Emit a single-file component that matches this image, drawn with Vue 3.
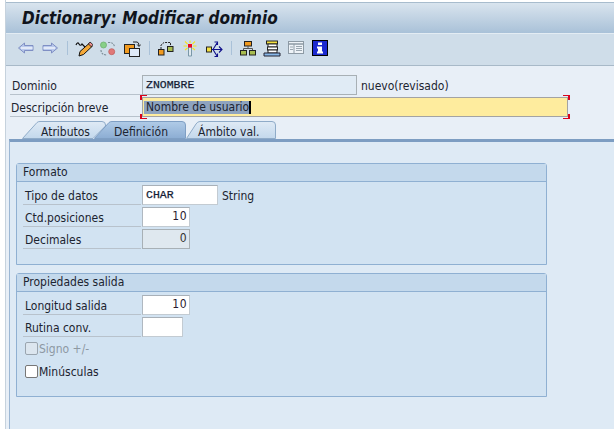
<script setup>
const tabs = [
  { label: 'Atributos', cls: 'tab-a', w: 84, grad: 'url(#tabLight)', path: 'M0.5 17.5 L15 1.5 Q16 0.5 18 0.5 H80 Q83.5 0.5 83.5 4 V5 L71 17.5 Z' },
  { label: 'Definición', cls: 'tab-d', w: 92, grad: 'url(#tabActive)', path: 'M0.5 17.5 L15 1.5 Q16 0.5 18 0.5 H88 Q91.5 0.5 91.5 4 V17.5 Z' },
  { label: 'Ámbito val.', cls: 'tab-m', w: 90, grad: 'url(#tabLight)', path: 'M0.5 17.5 L10 3 Q11.5 0.5 14 0.5 H86 Q89.5 0.5 89.5 4 V17.5 Z' }
]
</script>

<template>
  <div class="screen">
    <div class="window">
      <header class="title-bar"><h1>Dictionary: Modificar dominio</h1></header>

      <nav class="toolbar">
        <span class="ico"><svg width="18" height="16" viewBox="0 0 18 16"><path d="M1.5 8 L7.5 3 V5.5 H16 V10.5 H7.5 V13 Z" fill="#b9c9ec" stroke="#7f8fc4"/><path d="M4 8 H15.5" stroke="#e2e9f8" stroke-width="2"/></svg></span>
        <span class="ico"><svg width="18" height="16" viewBox="0 0 18 16"><path d="M16.5 8 L10.5 3 V5.5 H2 V10.5 H10.5 V13 Z" fill="#b9c9ec" stroke="#7f8fc4"/><path d="M2.5 8 H14" stroke="#e2e9f8" stroke-width="2"/></svg></span>
        <i class="sep"></i>
        <span class="ico"><svg width="18" height="18" viewBox="0 0 18 18"><path d="M1 6 Q2.5 2.5 4 5 T7 5 L10 8" fill="none" stroke="#111" stroke-width="1.2"/><path d="M4 17 L5 12.5 L14 4.5 L17 7.5 L8.5 15.5 Z" fill="#f4a838" stroke="#111"/><path d="M13.5 5 L15 3 L17.8 5.5 L16.5 8 Z" fill="#f09090" stroke="#111" stroke-width=".8"/></svg></span>
        <span class="ico"><svg width="18" height="18" viewBox="0 0 18 18"><circle cx="4.5" cy="6" r="3" fill="#88d088" stroke="#70b070" stroke-width=".8"/><circle cx="12.7" cy="12.7" r="3" fill="#e07878" stroke="#c06060" stroke-width=".8"/><path d="M9 3.5 Q15 3 15.5 8 M2 11 Q2 16 8 16" fill="none" stroke="#7a8a94" stroke-width="1.1" stroke-dasharray="2 1"/></svg></span>
        <span class="ico"><svg width="18" height="18" viewBox="0 0 18 18"><rect x="1.5" y="5.5" width="10" height="9" fill="#f09a20" stroke="#222"/><rect x="6.5" y="9.5" width="10" height="8" fill="#dfeaf8" stroke="#222"/><path d="M10 3 H14 Q16 3 16 7 M14.2 5.5 L16 7.5 L17.8 5.5" fill="none" stroke="#222"/></svg></span>
        <i class="sep"></i>
        <span class="ico"><svg width="18" height="18" viewBox="0 0 18 18"><rect x="1.5" y="10.5" width="5.5" height="5.5" fill="#f09a20" stroke="#222"/><rect x="10.5" y="7.5" width="5.5" height="5" fill="#a8bc50" stroke="#222"/><path d="M4 10 V6 L7 3.5 H13.5 V7" fill="none" stroke="#222" stroke-dasharray="2 1"/></svg></span>
        <span class="ico"><svg width="18" height="18" viewBox="0 0 18 18"><path d="M7.5 8 H10.5 V17 H7.5 Z" fill="#dfe8ee" stroke="#7a98a8"/><rect x="7" y="5" width="4" height="3.5" fill="#ee0a20"/><path d="M9 1.5 V4 M4 2.5 L6.5 5 M14 2.5 L11.5 5 M2.5 7 H6 M12 7 H15.5 M4 11 L6.5 9 M14 11 L11.5 9" stroke="#f2e420" stroke-width="1.1"/></svg></span>
        <span class="ico"><svg width="18" height="18" viewBox="0 0 18 18"><rect x="1.5" y="8" width="5" height="5" fill="#f4e040" stroke="#222"/><path d="M6.5 10.5 H16.5 M14 7.5 L17 10.5 L14 13.5 M8 10.5 L12 4 M9.5 3 H12.5 V6 M8 10.5 L12 17 M9.5 17.5 H12.5 V14.5" fill="none" stroke="#10108a" stroke-width="1.1"/></svg></span>
        <i class="sep"></i>
        <span class="ico"><svg width="18" height="18" viewBox="0 0 18 18"><rect x="5.5" y="2.5" width="7" height="4.5" fill="#f09a20" stroke="#222"/><path d="M9 7 V9.5 M4.5 11.5 V9.5 H13.5 V11.5" fill="none" stroke="#555"/><rect x="1.5" y="11.5" width="6" height="4.5" fill="#a8bc50" stroke="#222"/><rect x="10.5" y="11.5" width="6" height="4.5" fill="#a8bc50" stroke="#222"/></svg></span>
        <span class="ico"><svg width="18" height="18" viewBox="0 0 18 18"><rect x="3.5" y="2" width="11" height="3" fill="#f4e040" stroke="#222"/><rect x="5" y="5" width="9" height="3" fill="#fff" stroke="#222"/><rect x="4.5" y="8" width="10" height="3" fill="#fff" stroke="#222"/><rect x="5" y="11" width="9" height="3" fill="#fff" stroke="#222"/><path d="M1 14 H17 V17 H1 Z" fill="#88b8e8" stroke="#223"/></svg></span>
        <span class="ico"><svg width="16" height="14" viewBox="0 0 16 14"><rect x=".5" y=".5" width="15" height="12" fill="#eef3f8" stroke="#8d9aa5"/><path d="M.5 3 H15.5" stroke="#8d9aa5" stroke-width="1.5"/><path d="M6 3 V12" stroke="#8d9aa5"/><path d="M2 6 H5 M2 8.5 H5 M8 5.5 H14 M8 7.5 H14 M8 9.5 H14" stroke="#9aa6b0"/></svg></span>
        <span class="ico"><svg width="16" height="16" viewBox="0 0 16 16"><rect x=".5" y=".5" width="15" height="15" fill="#1c2ad0" stroke="#000"/><path d="M6 2.5 H10 V5 H6 Z M5 6.5 H10 V11.5 H11 V13.5 H5 V11.5 H6 V8.5 H5 Z" fill="#fff"/></svg></span>
      </nav>

      <div class="content">
        <div class="head-row first">
          <label class="lbl">Dominio</label>
          <div class="field ro mono">ZNOMBRE</div>
          <span class="note">nuevo(revisado)</span>
        </div>
        <div class="head-row desc-row">
          <label class="lbl">Descripción breve</label>
          <div class="field focus">
            <span class="sel">Nombre de usuario</span><span class="caret"></span>
            <i class="mark tl"></i><i class="mark bl"></i><i class="mark tr"></i><i class="mark br"></i>
          </div>
        </div>

        <svg class="defs" width="0" height="0">
          <defs>
            <linearGradient id="tabLight" x1="0" y1="0" x2="0" y2="1"><stop offset="0" stop-color="#dfeaf5"/><stop offset="1" stop-color="#c3d8ec"/></linearGradient>
            <linearGradient id="tabActive" x1="0" y1="0" x2="0" y2="1"><stop offset="0" stop-color="#b0cbe7"/><stop offset="1" stop-color="#8cadd3"/></linearGradient>
          </defs>
        </svg>

        <div class="tabs">
          <div v-for="t in tabs" :key="t.label" class="tab" :class="t.cls">
            <svg class="tab-bg" :viewBox="`0 0 ${t.w} 18`"><path :d="t.path" :fill="t.grad" /></svg>
            <span>{{ t.label }}</span>
          </div>
        </div>

        <section class="panel">
          <div class="group g1">
            <div class="group-head">Formato</div>
            <div class="group-body">
              <div class="row">
                <label class="lbl">Tipo de datos</label>
                <div class="field mono w76">CHAR</div>
                <span class="note">String</span>
              </div>
              <div class="row">
                <label class="lbl">Ctd.posiciones</label>
                <div class="field num w48">10</div>
              </div>
              <div class="row">
                <label class="lbl">Decimales</label>
                <div class="field num w48 dis">0</div>
              </div>
            </div>
          </div>

          <div class="group g2">
            <div class="group-head">Propiedades salida</div>
            <div class="group-body">
              <div class="row">
                <label class="lbl">Longitud salida</label>
                <div class="field num w48">10</div>
              </div>
              <div class="row">
                <label class="lbl">Rutina conv.</label>
                <div class="field w41"></div>
              </div>
              <div class="check disabled"><i></i>Signo +/-</div>
              <div class="check"><i></i>Minúsculas</div>
            </div>
          </div>
        </section>
      </div>
    </div>
  </div>
</template>

<style scoped>
.screen {
  width: 614px;
  height: 429px;
  overflow: hidden;
  background: #fff;
  padding-left: 5px;
  box-sizing: border-box;
  font-family: "DejaVu Sans", sans-serif;
  font-stretch: condensed;
  font-size: 12px;
  color: #1c2430;
}
.window {
  height: 429px;
  padding-top: 2px;
  box-sizing: border-box;
  display: flex;
  flex-direction: column;
  border-left: 1px solid #c6d2dd;
}
.title-bar {
  height: 31px;
  box-sizing: border-box;
  padding-left: 16px;
  display: flex;
  align-items: center;
  background: linear-gradient(#d9e4ee, #a9c1d8);
  border-top: 1px solid #a8bccd;
}
h1 {
  margin: 0;
  font-family: "DejaVu Sans", sans-serif;
  font-stretch: condensed;
  font-size: 17px;
  font-weight: 700;
  font-style: italic;
  color: #10141c;
}
.toolbar {
  height: 33px;
  box-sizing: border-box;
  background: #cfdde9;
  border-top: 1px solid #e3ecf3;
  border-bottom: 1px solid #a8b9c8;
  padding: 0 0 3px 8px;
  display: flex;
  align-items: center;
}
.ico {
  width: 24px;
  height: 20px;
  display: flex;
  align-items: center;
  justify-content: center;
}
.sep {
  width: 1px;
  height: 14px;
  margin: 0 4px 0 5px;
  background: #a9c1d8;
}
.content {
  flex: 1;
  display: flex;
  flex-direction: column;
  padding-top: 9px;
  min-height: 0;
  background: #e8eff7;
}
.defs { position: absolute; }
.head-row, .row {
  display: flex;
  align-items: flex-start;
}
.head-row { height: 20px; padding-left: 4px; }
.head-row.first { margin-bottom: 2px; }
.desc-row { margin-bottom: 4px; }
.lbl {
  width: 118px;
  height: 20px;
  line-height: 23px;
  margin-right: 1px;
  padding-left: 2px;
  box-sizing: border-box;
  border-bottom: 1px solid #b8c2cc;
  flex: none;
}
.head-row .lbl { width: 132px; margin-right: 0; }
.desc-row .lbl { padding-left: 1px; }
.field {
  position: relative;
  box-sizing: border-box;
  height: 20px;
  line-height: 17px;
  padding: 0 3px;
  background: #fff;
  border: 1px solid #c3cbd2;
  border-top-color: #a8b0b8;
  border-left-color: #b0b8c0;
  flex: none;
}
.ro {
  width: 215px;
  background: #e0ebf5;
  border-color: #a8b0b5;
}
.mono {
  font-family: "Liberation Mono", monospace;
  font-size: 11.5px;
  color: #141c34;
  -webkit-text-stroke: .25px #141c34;
}
.note { margin-left: 4px; line-height: 23px; }
.focus {
  width: 426px;
  background: #feec9e;
  border-color: #a3a3a3;
  display: flex;
  align-items: center;
  padding-left: 1px;
}
.sel {
  background: #8ea3bf;
  line-height: 13px;
  height: 13px;
  padding-left: 2px;
  white-space: nowrap;
}
.caret {
  width: 2px;
  height: 13px;
  background: #000;
}
.mark {
  position: absolute;
  width: 5px;
  height: 4px;
  border: 0 solid #d9041c;
}
.tl { left: -3px; top: -3px; border-width: 1px 0 0 2px; }
.bl { left: -3px; bottom: -3px; border-width: 0 0 1px 2px; }
.tr { right: -3px; top: -3px; border-width: 1px 2px 0 0; }
.br { right: -3px; bottom: -3px; border-width: 0 2px 1px 0; }
.tabs {
  height: 18px;
  display: flex;
  padding-left: 16px;
  flex: none;
}
.tab {
  position: relative;
  height: 18px;
  line-height: 22px;
  box-sizing: border-box;
}
.tab span { position: relative; }
.tab-bg {
  position: absolute;
  inset: 0;
  width: 100%;
  height: 100%;
}
.tab-bg path { stroke: #8fabc8; }
.tab-a { width: 84px; padding-left: 19px; }
.tab-d { width: 92px; margin-left: -12px; padding-left: 20px; z-index: 1; }
.tab-d .tab-bg path { stroke: #7f9fc4; }
.tab-m { width: 90px; padding-left: 12px; }
.panel {
  flex: 1;
  margin-left: 3px;
  border-top: 3px solid #7d9dc2;
  border-left: 1px solid #9cb7d4;
  background: #deeaf5;
  padding: 21px 0 0 6px;
  min-height: 0;
}
.group {
  width: 531px;
  box-sizing: border-box;
  border: 1px solid #8fb0d2;
  border-radius: 3px 3px 0 0;
  background: #d2e3f2;
}
.g1 { height: 102px; margin-bottom: 8px; }
.g2 { height: 124px; }
.group-head {
  height: 17px;
  line-height: 17px;
  padding-left: 6px;
  background: #c4d9ec;
  border-bottom: 1px solid #8fb0d2;
}
.group-body { padding: 3px 0 0 6px; }
.row { height: 20px; margin-bottom: 2px; }
.w76 { width: 76px; }
.w48 { width: 48px; }
.w41 { width: 41px; }
.num {
  text-align: right;
  padding-right: 2px;
  letter-spacing: .5px;
  color: #2a1a30;
}
.dis { background: #dfe8ef; border-color: #a8b0b5; color: #333; }
.check {
  display: flex;
  align-items: center;
  height: 19px;
  margin: 1px 0 4px 2px;
  gap: 1px;
}
.check i {
  width: 13px;
  height: 13px;
  box-sizing: border-box;
  background: #fff;
  border: 1px solid #777;
  border-radius: 2px;
  flex: none;
}
.check.disabled { color: #8d98a3; }
.check.disabled i { background: #dce6ef; border-color: #9aa5af; }
</style>

<style>
html, body { margin: 0; background: #fff; overflow: hidden; }
</style>
